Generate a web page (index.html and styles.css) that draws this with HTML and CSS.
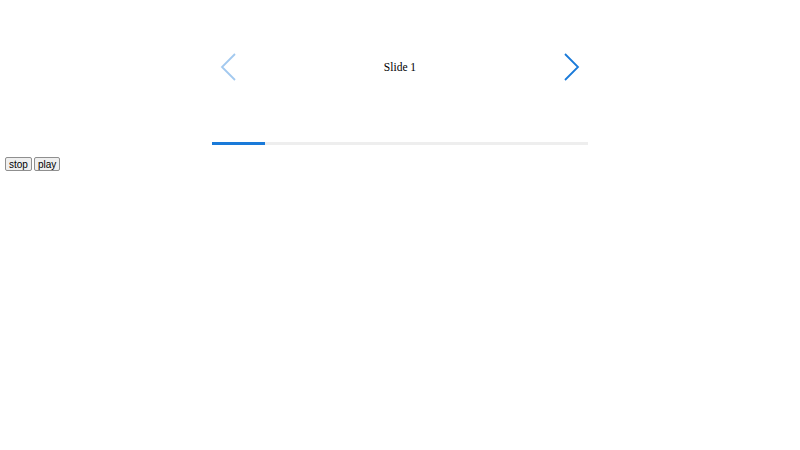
FILE: index.html
```html
<!DOCTYPE html>
<html>
	<head>
		<meta charset="utf-8">
		<title></title>

		<link rel="stylesheet" href="styles.css">
	</head>
	<body>
		<div class="slider">
			<div class="stage">
				<button class="arrow prev">
					<svg width="16" height="28" viewBox="0 0 16 28"><path d="M15 1 L2 14 L15 27" fill="none" stroke="currentColor" stroke-width="1.8"/></svg>
				</button>
				<div class="slide">Slide 1</div>
				<button class="arrow next">
					<svg width="16" height="28" viewBox="0 0 16 28"><path d="M1 1 L14 14 L1 27" fill="none" stroke="currentColor" stroke-width="1.8"/></svg>
				</button>
			</div>
			<div class="progress"><div class="fill" style="width: 53px"></div></div>
		</div>
		<div class="controls">
			<button class="btn">stop</button>
			<button class="btn">play</button>
		</div>
	</body>
</html>
```

FILE: styles.css
```css
* {
	margin: 0;
	padding: 0;
}

body {
	background: #ffffff;
	font-family: "Liberation Serif", serif;
}

.slider {
	width: 400px;
	margin: 0 auto;
}

.slider .stage {
	height: 134px;
	display: flex;
	align-items: center;
	justify-content: space-between;
	padding: 0 20px;
}

.slider .arrow {
	border: 0;
	background: none;
	color: #1a7ad9;
	display: flex;
	cursor: pointer;
}

.slider .arrow.prev {
	opacity: 0.4;
}

.slider .slide {
	font-size: 11.5px;
	color: #000000;
}

.slider .progress {
	margin: 8px 12px 0;
	height: 3px;
	background: #eeeeee;
}

.slider .progress .fill {
	height: 3px;
	background: #1a7ad9;
}

.controls {
	display: flex;
	gap: 2px;
	padding: 12px 5px 0;
}

.controls .btn {
	font-family: "Liberation Sans", Arial, sans-serif;
	font-size: 10px;
	height: 14px;
	padding: 1px 3px 0;
	border: 1px solid #8f8f8f;
	border-radius: 2px;
	background: #efefef;
	color: #000000;
	line-height: 11px;
}
```
